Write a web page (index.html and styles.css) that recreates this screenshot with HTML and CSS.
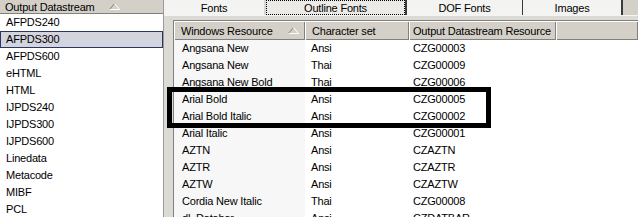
FILE: index.html
```html
<!DOCTYPE html>
<html lang="en">
<head>
  <meta charset="UTF-8" />
  <title>Resource Mapping</title>
  <link rel="stylesheet" href="styles.css">
</head>
<body>

<div class="app">
  <div class="ds-list">
    <div class="ds-head">
      <span>Output Datastream</span>
      <svg class="sort" width="11" height="7" viewBox="0 0 11 7"><polyline points="0.5,6.5 5.5,0.5" stroke="#808080" fill="none"/><polyline points="5.5,0.5 10.5,6.5 0.5,6.5" stroke="#ffffff" fill="none"/></svg>
    </div>
    <div class="ds-row">AFPDS240</div>
    <div class="ds-row selected">AFPDS300</div>
    <div class="ds-row">AFPDS600</div>
    <div class="ds-row">eHTML</div>
    <div class="ds-row">HTML</div>
    <div class="ds-row">IJPDS240</div>
    <div class="ds-row">IJPDS300</div>
    <div class="ds-row">IJPDS600</div>
    <div class="ds-row">Linedata</div>
    <div class="ds-row">Metacode</div>
    <div class="ds-row">MIBF</div>
    <div class="ds-row">PCL</div>
  </div>

  <div class="main">
    <div class="tabs">
      <div class="tab tab-fonts">Fonts</div>
      <div class="tab tab-focus"><span>Outline Fonts</span></div>
      <div class="tab tab-dof">DOF Fonts</div>
      <div class="tab tab-images">Images</div>
      <div class="tab-rest"></div>
    </div>

    <div class="panel">
      <div class="res-list">
        <div class="res-head">
          <div class="hcell c1"><span>Windows Resource</span>
            <svg class="sort" width="11" height="7" viewBox="0 0 11 7"><polyline points="0.5,6.5 5.5,0.5" stroke="#808080" fill="none"/><polyline points="5.5,0.5 10.5,6.5 0.5,6.5" stroke="#ffffff" fill="none"/></svg>
          </div>
          <div class="hcell c2">Character set</div>
          <div class="hcell c3">Output Datastream Resource</div>
          <div class="hcell c4"></div>
        </div>
        <div class="res-row"><div class="c1">Angsana New</div><div class="c2">Ansi</div><div class="c3">CZG00003</div></div>
        <div class="res-row"><div class="c1">Angsana New</div><div class="c2">Thai</div><div class="c3">CZG00009</div></div>
        <div class="res-row"><div class="c1">Angsana New Bold</div><div class="c2">Thai</div><div class="c3">CZG00006</div></div>
        <div class="res-row"><div class="c1">Arial Bold</div><div class="c2">Ansi</div><div class="c3">CZG00005</div></div>
        <div class="res-row"><div class="c1">Arial Bold Italic</div><div class="c2">Ansi</div><div class="c3">CZG00002</div></div>
        <div class="res-row"><div class="c1">Arial Italic</div><div class="c2">Ansi</div><div class="c3">CZG00001</div></div>
        <div class="res-row"><div class="c1">AZTN</div><div class="c2">Ansi</div><div class="c3">CZAZTN</div></div>
        <div class="res-row"><div class="c1">AZTR</div><div class="c2">Ansi</div><div class="c3">CZAZTR</div></div>
        <div class="res-row"><div class="c1">AZTW</div><div class="c2">Ansi</div><div class="c3">CZAZTW</div></div>
        <div class="res-row"><div class="c1">Cordia New Italic</div><div class="c2">Thai</div><div class="c3">CZG00008</div></div>
        <div class="res-row"><div class="c1">dl_Databar</div><div class="c2">Ansi</div><div class="c3">CZDATBAR</div></div>
      </div>
    </div>
  </div>

  <!-- annotation box drawn over the list -->
  <div class="callout"></div>
</div>

</body>
</html>
```

FILE: styles.css
```css
body {
  margin: 0;
  background: #d4d0c8;
  font-family: "Liberation Sans", Arial, sans-serif;
  font-size: 11px;
  letter-spacing: -0.2px;
  color: #000;
  overflow: hidden;
}

.app {
  position: relative;
  display: flex;
  width: 638px;
  height: 217px;
  overflow: hidden;
}

/* left list */
.ds-list {
  width: 163px;
  background: #ffffff;
  border-right: 1px solid #9a9a9a;
  flex-shrink: 0;
}

.ds-head {
  display: flex;
  align-items: center;
  height: 14px;
  padding-left: 5px;
  background: #d4d0c8;
  border-bottom: 1px solid #808080;
  box-sizing: border-box;
  white-space: nowrap;
}

.ds-head .sort {
  margin-left: 14px;
}

.ds-row {
  height: 17px;
  line-height: 17px;
  padding-left: 6px;
  box-sizing: border-box;
  white-space: nowrap;
}

.ds-row.selected {
  background: #d4d4de;
  border: 1px solid #2a3560;
  line-height: 15px;
  padding-left: 5px;
}

/* right side */
.main {
  flex: 1;
  display: flex;
  flex-direction: column;
  min-width: 0;
}

.tabs {
  display: flex;
  height: 15px;
  flex-shrink: 0;
}

.tab {
  display: flex;
  align-items: center;
  justify-content: center;
  background: #f3f3f1;
  box-sizing: border-box;
  white-space: nowrap;
}

.tab-fonts {
  width: 102px;
  border-right: 2px solid #d8d6d0;
}

.tab-focus {
  width: 139px;
  background: #ebeae6;
  border: 1px dotted #000;
}

.tab-dof {
  width: 118px;
  border-left: 2px solid #3a3a3a;
  border-right: 1px solid #3a3a3a;
}

.tab-images {
  width: 100px;
  border-right: 2px solid #3a3a3a;
}

.tab-rest {
  flex: 1;
  background: #d4d0c8;
}

.panel {
  flex: 1;
  padding: 4px 0 0 9px;
  background: #dcdad4;
  border-top: 1px solid #f4f4f4;
}

.res-list {
  height: 100%;
  background: #ffffff;
  border-top: 1px solid #808080;
  border-left: 1px solid #808080;
}

.res-head {
  display: flex;
  height: 19px;
}

.hcell {
  display: flex;
  align-items: center;
  flex-shrink: 0;
  padding-left: 7px;
  background: #d4d0c8;
  box-shadow: inset 1px 1px #ffffff, inset -1px -1px #808080;
  box-sizing: border-box;
  white-space: nowrap;
  overflow: hidden;
}

.hcell.c3 {
  padding-left: 4px;
}

.hcell .sort {
  margin-left: auto;
  margin-right: 6px;
}

.c1 { width: 131px; }
.c2 { width: 104px; }
.c3 { width: 147px; }
.c4 { flex: 1; }

.res-row {
  display: flex;
  height: 17px;
  line-height: 17px;
  white-space: nowrap;
}

.res-row .c1 {
  background: #f7f7f7;
  padding-left: 8px;
  box-sizing: border-box;
}

.res-row .c2 {
  padding-left: 6px;
  box-sizing: border-box;
}

.res-row .c3 {
  padding-left: 4px;
  box-sizing: border-box;
}

.callout {
  position: absolute;
  left: 167px;
  top: 87px;
  width: 324px;
  height: 41px;
  border: 5px solid #000;
  box-sizing: border-box;
}
```
